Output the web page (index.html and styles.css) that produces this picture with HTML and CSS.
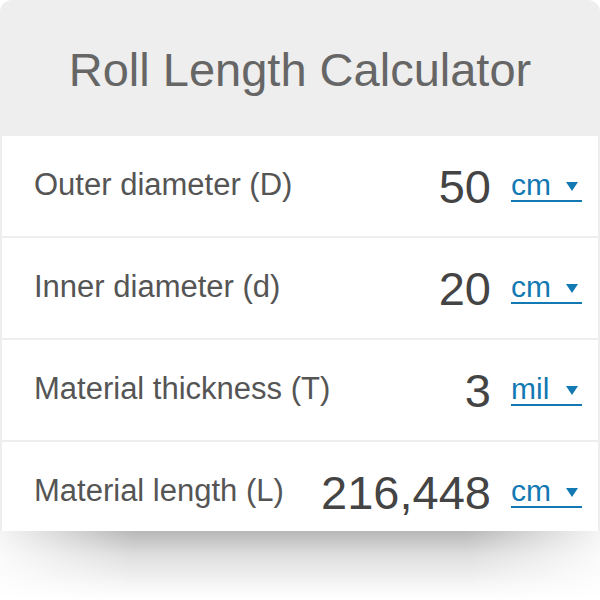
FILE: index.html
```html
<!DOCTYPE html>
<html>
<head>
  <meta charset="utf-8">
  <title>Roll Length Calculator</title>
  <link rel="stylesheet" href="styles.css">
</head>
<body>

<div class="calc">
  <div class="calc-title">Roll Length Calculator</div>

  <div class="calc-row">
    <span class="label">Outer diameter (D)</span>
    <span class="value">50</span>
    <span class="unit">cm<i class="caret"></i></span>
  </div>

  <div class="calc-row">
    <span class="label">Inner diameter (d)</span>
    <span class="value">20</span>
    <span class="unit">cm<i class="caret"></i></span>
  </div>

  <div class="calc-row">
    <span class="label">Material thickness (T)</span>
    <span class="value">3</span>
    <span class="unit">mil<i class="caret"></i></span>
  </div>

  <div class="calc-row">
    <span class="label">Material length (L)</span>
    <span class="value">216,448</span>
    <span class="unit">cm<i class="caret"></i></span>
  </div>
</div>
<div class="calc-shadow"></div>

</body>
</html>
```

FILE: styles.css
```css
body {
  margin: 0;
  background: #fff;
  font-family: "Liberation Sans", Arial, Helvetica, sans-serif;
}

.calc {
  width: 600px;
  height: 531px;
  box-sizing: border-box;
  padding: 0 2px;
  background: #eeeeee;
  border-radius: 12px 12px 0 0;
  overflow: hidden;
  display: flex;
  flex-direction: column;
  gap: 2px;
}

/* soft shadow under the cut-off card */
.calc-shadow {
  width: 600px;
  height: 69px;
  background: linear-gradient(to bottom, rgba(0, 0, 0, 0.28), rgba(0, 0, 0, 0.13) 35%, rgba(0, 0, 0, 0.03) 80%, rgba(0, 0, 0, 0));
  -webkit-mask-image: linear-gradient(to right, rgba(0, 0, 0, 0.15), #000 22%, #000 78%, rgba(0, 0, 0, 0.15));
  mask-image: linear-gradient(to right, rgba(0, 0, 0, 0.15), #000 22%, #000 78%, rgba(0, 0, 0, 0.15));
}

.calc-title {
  height: 134px;
  flex-shrink: 0;
  display: flex;
  align-items: center;
  justify-content: center;
  padding-top: 4px;
  box-sizing: border-box;
  font-size: 47px;
  line-height: 1;
  color: #666;
}

.calc-row {
  height: 100px;
  flex-shrink: 0;
  display: flex;
  align-items: center;
  background: #fff;
  padding: 0 16px 0 32px;
}

.label {
  flex: 1;
  font-size: 31px;
  line-height: 1;
  color: #555;
  padding-bottom: 4px;
}

.value {
  font-size: 47px;
  line-height: 1;
  color: #444;
  margin-right: 20px;
}

.unit {
  width: 71px;
  display: flex;
  align-items: center;
  justify-content: space-between;
  font-size: 30px;
  line-height: 1;
  color: #1279b3;
  border-bottom: 2px solid #1279b3;
}

.caret {
  width: 0;
  height: 0;
  margin: 2px 4px 0 0;
  border-left: 6px solid transparent;
  border-right: 6px solid transparent;
  border-top: 9px solid #1279b3;
}
```
